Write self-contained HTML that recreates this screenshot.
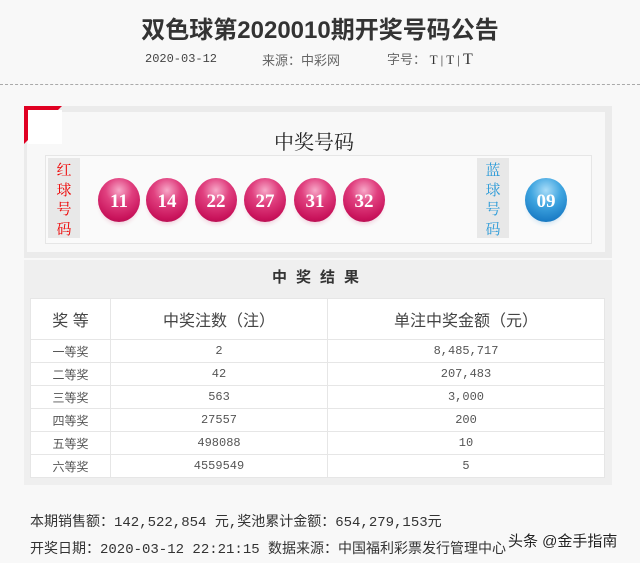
<!DOCTYPE html>
<html><head><meta charset="utf-8"><style>
body{margin:0;width:640px;height:563px;background:#f8f8f8;font-family:"Liberation Sans","Noto Sans CJK SC",sans-serif;position:relative;overflow:hidden;color:#333}
.a{position:absolute}
.m{font-family:"Liberation Mono","Noto Sans CJK SC",monospace}
.ball{position:absolute;top:178px;width:42px;height:44px;border-radius:50%;background:radial-gradient(circle at 50% 28%,#f7a8c8 0,#e0407f 35%,#c8125a 75%,#a00c48 100%);color:#fff;font:bold 19px "Liberation Serif",serif;text-align:center;line-height:48px;box-shadow:0 4px 4px -2px #f0d0dc}
.blue{background:radial-gradient(circle at 50% 28%,#a8dcf8 0,#3fa5e0 40%,#1a7cc5 80%,#12609c 100%);box-shadow:0 4px 4px -2px #cfe4f2}
table{border-collapse:collapse;position:absolute;left:30px;top:298px;width:575px;background:#fff;font-size:12px}
td{border:1px solid #e6e6e6;text-align:center;height:22px;padding:0;color:#555}
td.n{font-family:"Liberation Mono",monospace}
tr.h td{height:40px;font-size:16px;color:#444}
.lab{position:absolute;top:158px;width:32px;height:80px;background:#e8e8e8;font:15px "Noto Serif CJK SC",serif;text-align:center;line-height:19.5px;padding-top:2px;box-sizing:border-box}
</style></head><body>
<div class="a" style="left:0;top:10px;width:640px;text-align:center;font-size:24px;font-weight:bold;color:#333">双色球第2020010期开奖号码公告</div>
<div class="a m" style="left:145px;top:52px;font-size:12px;color:#444">2020-03-12</div>
<div class="a" style="left:262px;top:50px;font-size:13px;color:#666">来源：中彩网</div>
<div class="a" style="left:387px;top:49px;font-size:13px;color:#666">字号： <span style="font-family:'Liberation Serif';color:#333">T | T | <span style="font-size:16px">T</span></span></div>
<div class="a" style="left:0;top:84px;width:640px;border-top:1px dashed #aaa"></div>
<div class="a" style="left:24px;top:106px;width:588px;height:152px;background:#ebebeb"></div>
<div class="a" style="left:27px;top:112px;width:578px;height:140px;background:#f8f8f8"></div>
<div class="a" style="left:24px;top:106px;width:0;height:0;border-top:38px solid #e00022;border-right:38px solid transparent"></div>
<div class="a" style="left:28px;top:110px;width:34px;height:34px;background:#fff"></div>
<div class="a" style="left:0;top:126px;width:628px;text-align:center;font:20px 'Noto Serif CJK SC',serif;color:#222">中奖号码</div>
<div class="a" style="left:45px;top:155px;width:545px;height:87px;border:1px solid #e6e6e6;background:#fafafa"></div>
<div class="lab" style="left:48px;color:#e00">红<br>球<br>号<br>码</div>
<div class="lab" style="left:477px;color:#2a9ad8">蓝<br>球<br>号<br>码</div>
<div class="ball" style="left:98px">11</div>
<div class="ball" style="left:146px">14</div>
<div class="ball" style="left:195px">22</div>
<div class="ball" style="left:244px">27</div>
<div class="ball" style="left:294px">31</div>
<div class="ball" style="left:343px">32</div>
<div class="ball blue" style="left:525px">09</div>
<div class="a" style="left:24px;top:260px;width:588px;height:225px;background:#efefef"></div>
<div class="a" style="left:0;top:266px;width:640px;text-align:center;font-size:15px;font-weight:bold;letter-spacing:9px;color:#333">中奖结果</div>
<table>
<tr class="h"><td style="width:79px">奖 等</td><td style="width:216px">中奖注数（注）</td><td>单注中奖金额（元）</td></tr>
<tr><td>一等奖</td><td class="n">2</td><td class="n">8,485,717</td></tr>
<tr><td>二等奖</td><td class="n">42</td><td class="n">207,483</td></tr>
<tr><td>三等奖</td><td class="n">563</td><td class="n">3,000</td></tr>
<tr><td>四等奖</td><td class="n">27557</td><td class="n">200</td></tr>
<tr><td>五等奖</td><td class="n">498088</td><td class="n">10</td></tr>
<tr><td>六等奖</td><td class="n">4559549</td><td class="n">5</td></tr>
</table>
<div class="a m" style="left:30px;top:511px;font-size:14px;color:#333;white-space:nowrap">本期销售额：142,522,854 元,奖池累计金额：654,279,153元</div>
<div class="a m" style="left:30px;top:538px;font-size:14px;color:#333;white-space:nowrap">开奖日期：2020-03-12 22:21:15 数据来源：中国福利彩票发行管理中心</div>
<div class="a" style="left:508px;top:530px;font-size:15px;color:#222;text-shadow:0 0 2px #fff,0 0 2px #fff">头条 @金手指南</div>
</body></html>
